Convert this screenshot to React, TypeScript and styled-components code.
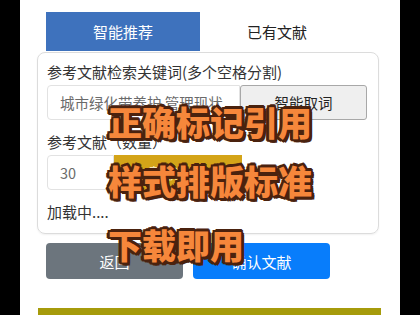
import React from "react";
import styled, { createGlobalStyle } from "styled-components";

const GlobalStyle = createGlobalStyle`
  html, body {
    margin: 0;
    padding: 0;
    background: #000;
    font-family: "Noto Sans CJK SC", "Noto Sans", sans-serif;
  }
`;

const Page = styled.div`
  position: relative;
  width: 380px;
  height: 315px;
  margin-left: 20px;
  background: #fff;
  padding: 12px 21px 0 17px;
  box-sizing: border-box;
  overflow: hidden;
`;

const Tabs = styled.div`
  display: flex;
  padding: 0 9px;
`;

const Tab = styled.div<{ $active?: boolean }>`
  width: 154px;
  height: 39px;
  display: flex;
  align-items: center;
  justify-content: center;
  font-size: 15px;
  color: ${p => (p.$active ? "#fff" : "#222")};
  background: ${p => (p.$active ? "#3e72bd" : "transparent")};
`;

const Card = styled.div`
  margin-top: 1px;
  border: 1px solid #dcdcdc;
  border-radius: 8px;
  padding: 9px 10px 11px 9px;
  box-shadow: 0 1px 2px rgba(0, 0, 0, 0.06);
`;

const Label = styled.div`
  font-size: 15px;
  line-height: 20px;
  color: #333;
  white-space: nowrap;
`;

const Row = styled.div`
  display: flex;
  margin-top: 3px;
  margin-bottom: 12px;
`;

const Input = styled.div<{ $w: number }>`
  width: ${p => p.$w}px;
  height: 35px;
  box-sizing: border-box;
  border: 1px solid #e2e2e2;
  border-radius: 4px 0 0 4px;
  padding-left: 12px;
  display: flex;
  align-items: center;
  font-size: 14.5px;
  color: #6a6a6a;
  white-space: nowrap;
  overflow: hidden;
`;

const GreyButton = styled.div`
  width: 127px;
  height: 35px;
  box-sizing: border-box;
  background: #efefef;
  border: 1px solid #a8a8a8;
  border-radius: 3px;
  display: flex;
  align-items: center;
  justify-content: center;
  font-size: 14.5px;
  color: #222;
`;

const GoldButton = styled.div`
  width: 128px;
  height: 35px;
  background: #d4a418;
  display: flex;
  align-items: center;
  justify-content: center;
  font-size: 14.5px;
  color: #f6e6b8;
`;

const Loading = styled.div`
  font-size: 15px;
  line-height: 20px;
  color: #333;
`;

const Actions = styled.div`
  display: flex;
  gap: 10px;
  padding-left: 9px;
  margin-top: 9px;
`;

const Button = styled.div<{ $bg: string }>`
  width: 137px;
  height: 36px;
  border-radius: 4px;
  background: ${p => p.$bg};
  color: #fff;
  font-size: 15px;
  display: flex;
  align-items: center;
  justify-content: center;
`;

const Bar = styled.div`
  margin-top: 29px;
  margin-left: 1px;
  width: 343px;
  height: 10px;
  background: #a69b0b;
`;

const Overlay = styled.div`
  position: absolute;
  left: 88px;
  top: 103px;
  pointer-events: none;
`;

const ring = "#4a220e";

const Caption = styled.div<{ $mt: number }>`
  margin-top: ${p => p.$mt}px;
  font-size: 34px;
  line-height: 37px;
  font-weight: 900;
  color: #f6873b;
  white-space: nowrap;
  text-shadow:
    2px 0 0 ${ring}, -2px 0 0 ${ring}, 0 2px 0 ${ring}, 0 -2px 0 ${ring},
    2px 2px 0 ${ring}, -2px -2px 0 ${ring}, 2px -2px 0 ${ring}, -2px 2px 0 ${ring},
    3px 1px 0 ${ring}, 1px 3px 0 ${ring}, -3px 1px 0 ${ring}, 1px -3px 0 ${ring},
    3px 3px 0 ${ring};
`;

export default function App() {
  return (
    <>
      <GlobalStyle />
      <Page>
        <Tabs>
          <Tab $active>智能推荐</Tab>
          <Tab>已有文献</Tab>
        </Tabs>
        <Card>
          <Label>参考文献检索关键词(多个空格分割)</Label>
          <Row>
            <Input $w={193}>城市绿化带养护 管理现状</Input>
            <GreyButton>智能取词</GreyButton>
          </Row>
          <Label>参考文献（数量）</Label>
          <Row>
            <Input $w={67}>30</Input>
            <GoldButton>获取文献</GoldButton>
          </Row>
          <Loading>加载中....</Loading>
        </Card>
        <Actions>
          <Button $bg="#6c757d">返回</Button>
          <Button $bg="#087dfb">确认文献</Button>
        </Actions>
        <Bar />
        <Overlay>
          <Caption $mt={0}>正确标记引用</Caption>
          <Caption $mt={22}>样式排版标准</Caption>
          <Caption $mt={27}>下载即用</Caption>
        </Overlay>
      </Page>
    </>
  );
}
